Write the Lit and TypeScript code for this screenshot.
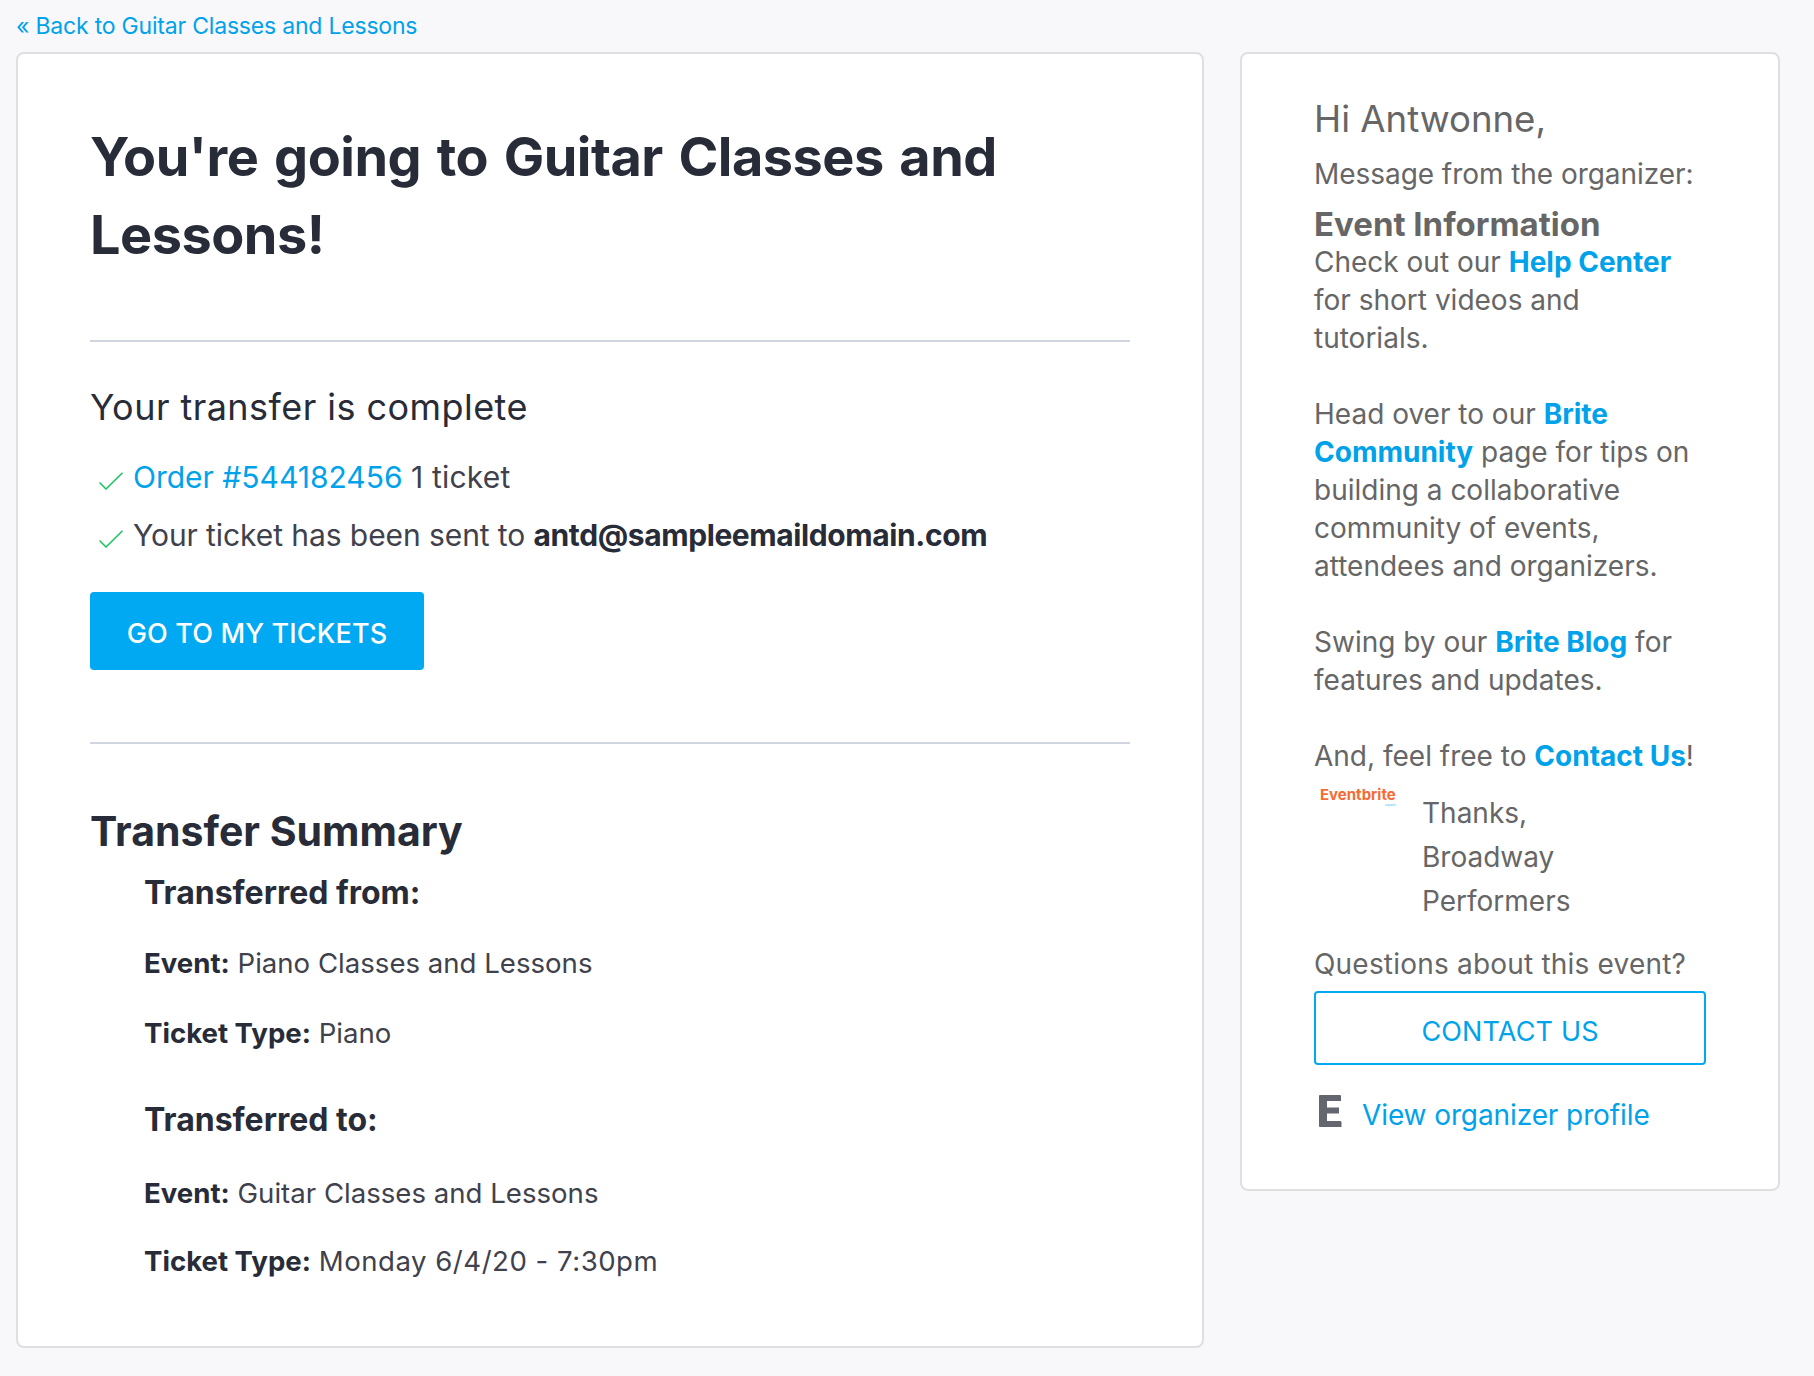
import { LitElement, html, css } from "lit";
import { customElement } from "lit/decorators.js";

@customElement("app-root")
export class AppRoot extends LitElement {
  static styles = css`
    :host { display: block; min-height: 1376px; background: #f8f8fa; font-family: Inter, "Liberation Sans", sans-serif; box-sizing: border-box; padding: 0 34px 0 16px; color: #3f424c; }
    a { color: #00a2ea; text-decoration: none; }
    .back { display: block; height: 52px; line-height: 52px; font-size: 23px; letter-spacing: -0.2px; }
    .layout { display: flex; gap: 36px; align-items: flex-start; }
    .card { background: #fff; border: 2px solid #dfdfdf; border-radius: 8px; box-sizing: border-box; }
    .main { width: 1188px; height: 1296px; padding: 64px 72px 0; }
    h1 { margin: 0; font-size: 54px; line-height: 78px; font-weight: 700; color: #272c38; letter-spacing: -0.5px; word-spacing: 3.3px; }
    .rule { height: 2px; background: #d1d5e0; margin: 0; }
    .r1 { margin-top: 66px; }
    .status { font-size: 36px; line-height: 46px; color: #272c38; margin: 42px 0 0; font-weight: 400; letter-spacing: 0.45px; }
    .row { display: flex; align-items: flex-start; font-size: 30px; line-height: 40px; margin-top: 18px; }
    .row.first { margin-top: 27px; }
    .row svg { width: 24px; height: 18px; margin: 15px 10px 0 9px; flex: none; }
    .row .sent { letter-spacing: -0.08px; }
    .row .one { letter-spacing: 0.2px; }
    .row b { color: #272c38; font-weight: 700; letter-spacing: -0.4px; }
    .btn { display: flex; align-items: center; justify-content: center; box-sizing: border-box; padding-top: 5px; width: 334px; height: 78px; margin-top: 37px; background: #00a9f1; color: #fff; border-radius: 4px; font-size: 27px; letter-spacing: 0.15px; font-weight: 500; }
    .r2 { margin-top: 72px; }
    h2 { font-size: 41px; line-height: 52px; font-weight: 700; color: #272c38; margin: 61px 0 0; }
    .sum { padding-left: 54px; }
    h3 { font-size: 32px; line-height: 44px; font-weight: 700; color: #272c38; margin: 13.5px 0 0; }
    h3.to { margin-top: 45px; }
    .sum p { margin: 0; font-size: 27.6px; line-height: 40px; }
    .sum p.p1 { margin-top: 28.3px; }
    .sum p.p2 { margin-top: 30.5px; }
    .sum p.p3 { margin-top: 31px; }
    .sum p.p4 { margin-top: 27.5px; }
    .sum b { color: #272c38; font-weight: 700; }
    .sum .when { letter-spacing: 0.5px; }
    .side { width: 540px; height: 1139px; padding: 40.5px 72px 0; color: #666; font-size: 28px; line-height: 38px; }
    .hi { font-size: 36.6px; line-height: 48px; }
    .msg { margin-top: 12px; letter-spacing: -0.05px; }
    .ei { font-size: 33px; font-weight: 700; line-height: 37px; margin-top: 13.5px; }
    .side a.b { font-weight: 700; }
    .side p { margin: 0 0 38px; max-width: 384px; }
    .thanks { display: flex; margin-top: -34px; }
    .logo { width: 108px; flex: none; padding: 7px 0 0 6px; box-sizing: border-box; color: #f66b34; font-size: 15px; font-weight: 700; line-height: 18px; }
    .logo small { display: block; font-size: 3px; line-height: 3px; color: #3cc6f0; text-align: right; width: 76px; font-weight: 400; }
    .tx { line-height: 44px; padding-top: 12px; }
    .q { margin-top: 21.5px; letter-spacing: 0.2px; }
    .contact { display: flex; align-items: center; justify-content: center; box-sizing: border-box; padding-top: 8px; width: 392px; height: 74px; margin-top: 8.5px; border: 2px solid #00a9f1; border-radius: 4px; font-size: 27px; letter-spacing: 0.15px; }
    .org { display: flex; align-items: center; margin-top: 30.5px; letter-spacing: -0.1px; }
    .org svg { width: 24px; height: 34px; margin: -7px 20px 0 4px; flex: none; }
  `;

  private check() {
    return html`<svg viewBox="0 0 24 18"><path d="M0.5 10.5 L7 17 L23.5 0.8" fill="none" stroke="#14c45c" stroke-width="1.5"/></svg>`;
  }

  render() {
    return html`
      <a class="back" href="#">« Back to Guitar Classes and Lessons</a>
      <div class="layout">
        <section class="card main">
          <h1>You're going to Guitar Classes and Lessons!</h1>
          <div class="rule r1"></div>
          <div class="status">Your transfer is complete</div>
          <div class="row first">${this.check()}<span><a href="#">Order #544182456</a> <span class="one">1 ticket</span></span></div>
          <div class="row">${this.check()}<span class="sent">Your ticket has been sent to <b>antd@sampleemaildomain.com</b></span></div>
          <a class="btn" href="#">GO TO MY TICKETS</a>
          <div class="rule r2"></div>
          <h2>Transfer Summary</h2>
          <div class="sum">
            <h3>Transferred from:</h3>
            <p class="p1"><b>Event:</b> Piano Classes and Lessons</p>
            <p class="p2"><b>Ticket Type:</b> Piano</p>
            <h3 class="to">Transferred to:</h3>
            <p class="p3"><b>Event:</b> Guitar Classes and Lessons</p>
            <p class="p4"><b>Ticket Type:</b> <span class="when">Monday 6/4/20 - 7:30pm</span></p>
          </div>
        </section>
        <aside class="card side">
          <div class="hi">Hi Antwonne,</div>
          <div class="msg">Message from the organizer:</div>
          <div class="ei">Event Information</div>
          <p>Check out our <a class="b" href="#">Help Center</a> for short videos and tutorials.</p>
          <p>Head over to our <a class="b" href="#">Brite Community</a> page for tips on building a collaborative community of events, attendees and organizers.</p>
          <p>Swing by our <a class="b" href="#">Brite Blog</a> for features and updates.</p>
          <p>And, feel free to <a class="b" href="#">Contact Us</a>!</p>
          <div class="thanks">
            <div class="logo">Eventbrite<small>support</small></div>
            <div class="tx">Thanks,<br />Broadway<br />Performers</div>
          </div>
          <div class="q">Questions about this event?</div>
          <a class="contact" href="#">CONTACT US</a>
          <div class="org">
            <svg viewBox="0 0 24 34"><path d="M2 1 H22 Q23 1 23 2 V7 H9 V13.5 H21 V19.5 H9 V27 H22.5 L23.5 28 V33 H2 Q1 33 1 32 V2 Q1 1 2 1 Z" fill="#63666f"/></svg>
            <a href="#">View organizer profile</a>
          </div>
        </aside>
      </div>
    `;
  }
}
